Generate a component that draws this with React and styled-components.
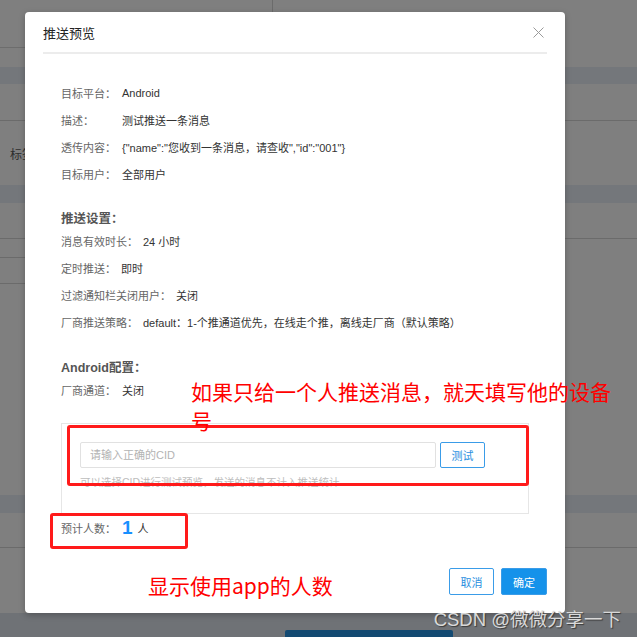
import React from "react";
import styled, { createGlobalStyle } from "styled-components";

const Global = createGlobalStyle`
  html, body { margin: 0; padding: 0; }
  body { font-family: "Liberation Sans", "Noto Sans CJK SC", sans-serif; }
  * { box-sizing: border-box; }
`;

const Page = styled.div`
  position: relative;
  width: 637px;
  height: 637px;
  overflow: hidden;
  background: #7f7f7f;
  display: flex;
  flex-direction: column;
`;

/* ---------- dimmed background page ---------- */
const BgTop = styled.div`
  height: 48px;
  display: flex;
  flex: none;
`;
const BgTopCell = styled.div`
  width: 273px;
  border-right: 1px solid #6b6b6b;
  border-bottom: 1px solid #6d6d6d;
`;
const BgSpace = styled.div`
  height: ${(p) => p.$h}px;
  flex: ${(p) => (p.$grow ? 1 : "none")};
`;
const BgBand = styled.div`
  height: ${(p) => p.$h}px;
  flex: none;
  background: #74777b;
`;
const BgRow = styled.div`
  height: ${(p) => p.$h}px;
  flex: none;
  display: flex;
  align-items: center;
  padding-left: 10px;
  border-bottom: ${(p) => (p.$line ? "1px solid #6b6b6b" : "none")};
  color: #2e2e2e;
  font-size: 12px;
`;
const BgLeftRow = styled.div`
  height: ${(p) => p.$h}px;
  width: 60px;
  flex: none;
  border-bottom: 1px solid #6b6b6b;
`;
const BgFooter = styled.div`
  height: 24px;
  flex: none;
  background: #6f7276;
  display: flex;
  align-items: flex-end;
  padding-left: 285px;
`;
const BgButton = styled.div`
  width: 168px;
  height: 7px;
  background: #134a72;
  border-radius: 2px 2px 0 0;
`;

/* ---------- dialog ---------- */
const Dialog = styled.div`
  position: absolute;
  left: 25px;
  top: 12px;
  width: 540px;
  height: 601px;
  background: #fff;
  border-radius: 4px;
  box-shadow: 0 2px 6px rgba(0, 0, 0, 0.25);
  display: flex;
  flex-direction: column;
`;
const Header = styled.div`
  height: 42px;
  margin: 0 18px;
  border-bottom: 2px solid #ececec;
  display: flex;
  align-items: center;
  justify-content: space-between;
`;
const Title = styled.div`
  font-size: 13px;
  color: #222;
  font-family: "Noto Sans CJK SC", sans-serif;
`;
const Close = styled.svg`
  width: 11px;
  height: 11px;
  margin-right: 3px;
`;
const Body = styled.div`
  flex: 1;
  display: flex;
  flex-direction: column;
  padding: 25px 0 0 36px;
`;
const InfoRow = styled.div`
  height: 27px;
  display: flex;
  align-items: center;
  font-size: 11px;
  white-space: nowrap;
`;
const Label = styled.span`
  color: #666;
  width: ${(p) => (p.$fixed ? "61px" : "auto")};
  margin-right: ${(p) => (p.$fixed ? "0" : "5px")};
  flex: none;
`;
const Value = styled.span`
  color: #333;
`;
const SectionTitle = styled.div`
  margin-top: ${(p) => p.$mt}px;
  height: 20px;
  display: flex;
  align-items: center;
  font-size: 12.5px;
  font-weight: bold;
  color: #555;
`;
const CidBox = styled.div`
  margin-top: 20px;
  width: 468px;
  height: 91px;
  border: 1px solid #e6e6e6;
  padding: 18px 0 0 18px;
`;
const InputRow = styled.div`
  display: flex;
  align-items: center;
`;
const CidInput = styled.input`
  width: 356px;
  height: 26px;
  border: 1px solid #e1e1e1;
  border-radius: 2px;
  padding: 0 9px;
  font-size: 11px;
  font-family: "Liberation Sans", "Noto Sans CJK SC", sans-serif;
  outline: none;
  &::placeholder { color: #b3b3b3; }
`;
const Button = styled.button`
  width: ${(p) => p.$w}px;
  height: ${(p) => p.$h}px;
  border: 1px solid #3a9ce8;
  border-radius: 2px;
  background: ${(p) => (p.$primary ? "#1592ea" : "#fff")};
  color: ${(p) => (p.$primary ? "#fff" : "#2a8fe0")};
  font-size: 11px;
  font-family: "Noto Sans CJK SC", sans-serif;
  padding: 0;
  margin-left: ${(p) => p.$ml || 0}px;
`;
const Hint = styled.div`
  margin-top: 7px;
  font-size: 10.5px;
  line-height: 14px;
  color: #bdbdbd;
  white-space: nowrap;
`;
const CountNum = styled.span`
  font-size: 19px;
  font-weight: bold;
  color: #1890ff;
  margin: 0 5px 0 1px;
  font-family: "Liberation Sans", sans-serif;
`;
const Footer = styled.div`
  margin-top: auto;
  display: flex;
  justify-content: flex-end;
  gap: 7px;
  padding: 0 18px 18px 0;
`;

/* ---------- annotations ---------- */
const RedBox = styled.div`
  position: absolute;
  left: ${(p) => p.$x}px;
  top: ${(p) => p.$y}px;
  width: ${(p) => p.$w}px;
  height: ${(p) => p.$h}px;
  border: 3px solid #ff1a1a;
  border-radius: 3px;
`;
const RedNote = styled.div`
  position: absolute;
  left: ${(p) => p.$x}px;
  top: ${(p) => p.$y}px;
  color: #ff0000;
  font-size: 21px;
  line-height: 29px;
  white-space: nowrap;
  font-family: "Noto Sans CJK SC", sans-serif;
`;
const Watermark = styled.div`
  position: absolute;
  right: 16px;
  top: 605px;
  font-size: 18.5px;
  color: #d9d9d9;
  text-shadow: 1px 1px 1px #3a3a3a;
  font-family: "Liberation Sans", "Noto Sans CJK SC", sans-serif;
  white-space: nowrap;
`;

export default function App() {
  return (
    <>
      <Global />
      <Page>
        <BgTop>
          <BgTopCell />
        </BgTop>
        <BgSpace $h={19} />
        <BgBand $h={17} />
        <BgRow $h={37} $line />
        <BgRow $h={64}>标签</BgRow>
        <BgBand $h={18} />
        <BgRow $h={36} $line />
        <BgLeftRow $h={19} />
        <BgLeftRow $h={26} />
        <BgSpace $h={211} />
        <BgBand $h={18} />
        <BgRow $h={35} $line />
        <BgSpace $grow />
        <BgFooter>
          <BgButton />
        </BgFooter>

        <Dialog>
          <Header>
            <Title>推送预览</Title>
            <Close viewBox="0 0 11 11">
              <path d="M0.5 0.5 L10.5 10.5 M10.5 0.5 L0.5 10.5" stroke="#9a9a9a" strokeWidth="1" fill="none" />
            </Close>
          </Header>
          <Body>
            <InfoRow><Label $fixed>目标平台：</Label><Value>Android</Value></InfoRow>
            <InfoRow><Label $fixed>描述：</Label><Value>测试推送一条消息</Value></InfoRow>
            <InfoRow><Label $fixed>透传内容：</Label><Value>{'{"name":"您收到一条消息，请查收","id":"001"}'}</Value></InfoRow>
            <InfoRow><Label $fixed>目标用户：</Label><Value>全部用户</Value></InfoRow>

            <SectionTitle $mt={20}>推送设置：</SectionTitle>
            <InfoRow><Label>消息有效时长：</Label><Value>24 小时</Value></InfoRow>
            <InfoRow><Label>定时推送：</Label><Value>即时</Value></InfoRow>
            <InfoRow><Label>过滤通知栏关闭用户：</Label><Value>关闭</Value></InfoRow>
            <InfoRow><Label>厂商推送策略：</Label><Value>default：1-个推通道优先，在线走个推，离线走厂商（默认策略）</Value></InfoRow>

            <SectionTitle $mt={21}>Android配置：</SectionTitle>
            <InfoRow><Label $fixed>厂商通道：</Label><Value>关闭</Value></InfoRow>

            <CidBox>
              <InputRow>
                <CidInput placeholder="请输入正确的CID" />
                <Button $w={45} $h={26} $ml={4}>测试</Button>
              </InputRow>
              <Hint>可以选择CID进行测试预览，发送的消息不计入推送统计</Hint>
            </CidBox>

            <InfoRow>
              <Label>预计人数：</Label>
              <CountNum>1</CountNum>
              <Value>人</Value>
            </InfoRow>

            <Footer>
              <Button $w={45} $h={27}>取消</Button>
              <Button $w={46} $h={27} $primary>确定</Button>
            </Footer>
          </Body>
        </Dialog>

        <RedBox $x={67} $y={425} $w={462} $h={61} />
        <RedBox $x={50} $y={513} $w={138} $h={36} />
        <RedNote $x={191} $y={377}>
          如果只给一个人推送消息，就天填写他的设备
          <br />号
        </RedNote>
        <RedNote $x={148} $y={571}>显示使用app的人数</RedNote>
        <Watermark>CSDN @微微分享一下</Watermark>
      </Page>
    </>
  );
}
